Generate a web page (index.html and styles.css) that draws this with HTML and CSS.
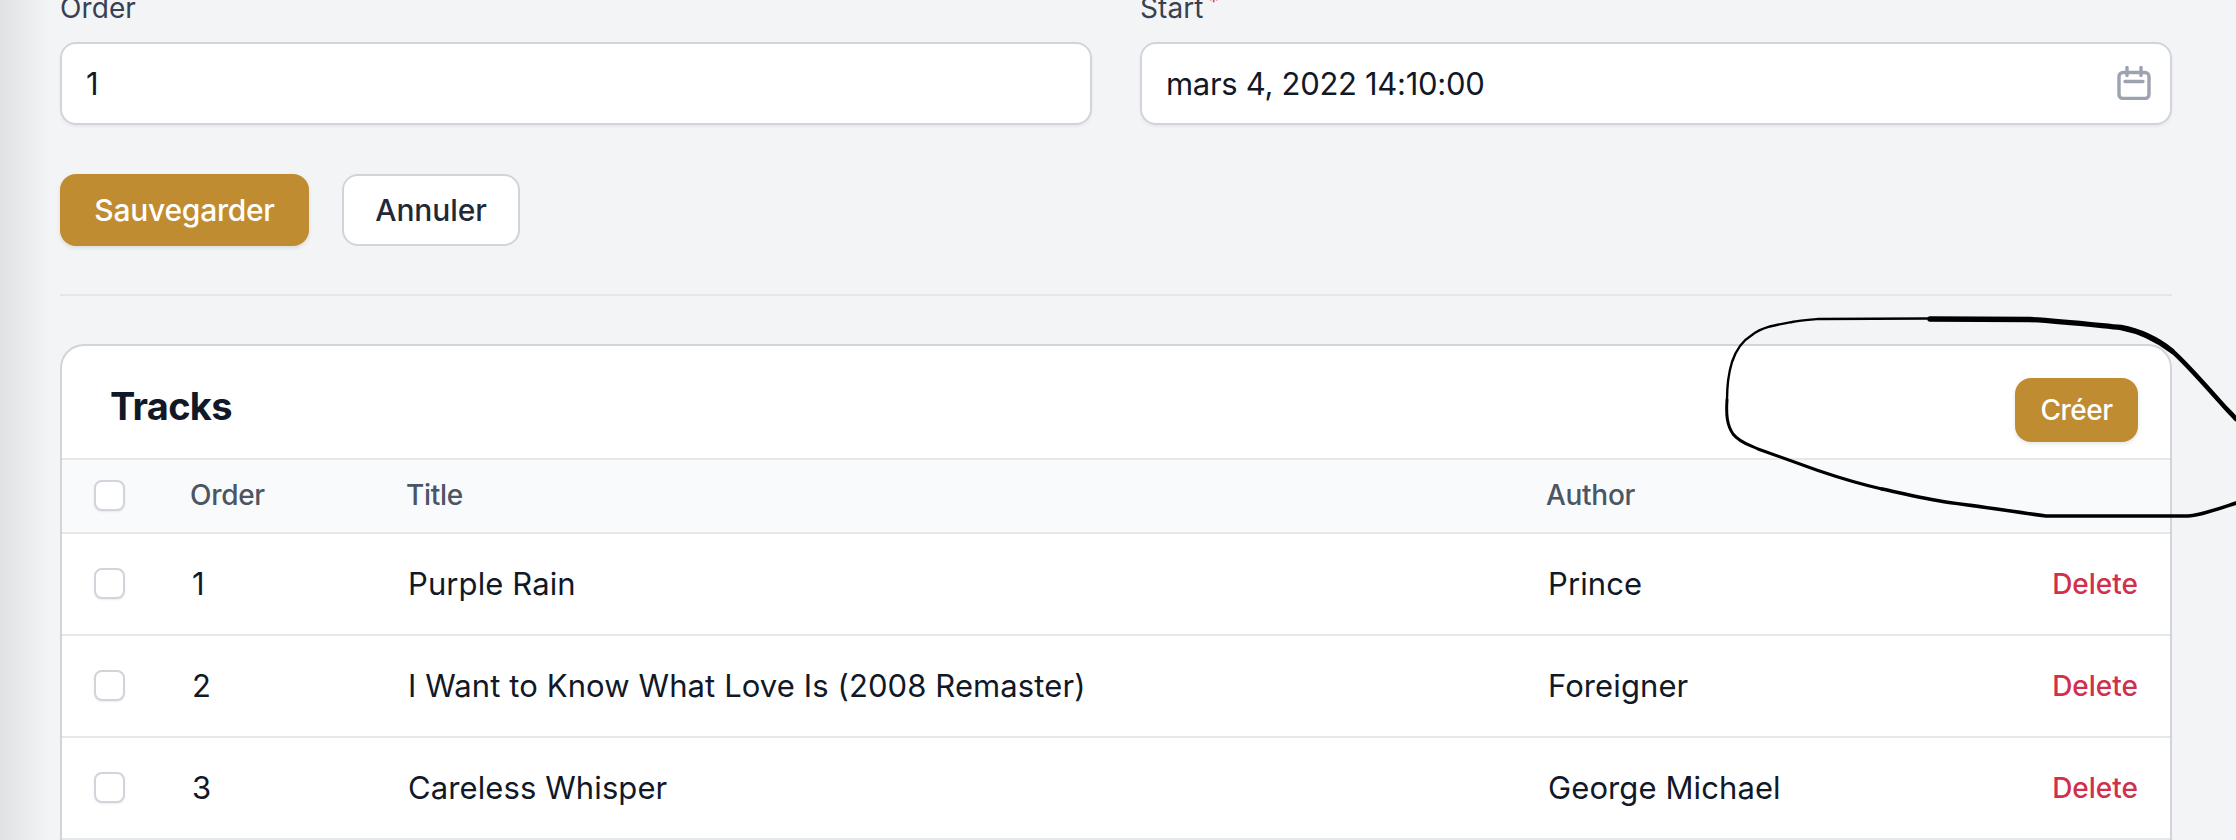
FILE: index.html
```html
<!DOCTYPE html>
<html lang="fr">
<head>
<meta charset="utf-8">
<title>Tracks</title>
<link rel="stylesheet" href="styles.css">
</head>
<body>
<main class="page">
  <section class="fields">
    <div class="field">
      <label class="label">Order</label>
      <div class="input">1</div>
    </div>
    <div class="field">
      <label class="label">Start<sup class="req">*</sup></label>
      <div class="input input-date">
        <span>mars 4, 2022 14:10:00</span>
        <svg class="cal" viewBox="0 0 34 34" fill="none" stroke="#9ca3af" stroke-width="3.4" stroke-linecap="round" stroke-linejoin="round"><rect x="2" y="6.5" width="30" height="26" rx="4"/><path d="M10 1.5v8M24 1.5v8M8 15.5h18"/></svg>
      </div>
    </div>
  </section>
  <div class="actions">
    <button class="btn btn-primary">Sauvegarder</button>
    <button class="btn btn-plain">Annuler</button>
  </div>
  <hr class="rule">
  <section class="card">
    <header class="card-head">
      <h2 class="card-title">Tracks</h2>
      <button class="btn-small">Créer</button>
    </header>
    <table class="table">
      <colgroup><col class="c1"><col class="c2"><col class="c3"><col class="c4"><col class="c5"></colgroup>
      <thead>
        <tr><th><span class="check"></span></th><th>Order</th><th>Title</th><th>Author</th><th></th></tr>
      </thead>
      <tbody>
        <tr><td><span class="check"></span></td><td>1</td><td>Purple Rain</td><td>Prince</td><td class="del">Delete</td></tr>
        <tr><td><span class="check"></span></td><td>2</td><td>I Want to Know What Love Is (2008 Remaster)</td><td>Foreigner</td><td class="del">Delete</td></tr>
        <tr><td><span class="check"></span></td><td>3</td><td>Careless Whisper</td><td>George Michael</td><td class="del">Delete</td></tr>
      </tbody>
    </table>
  </section>
</main>
<svg class="scribble" viewBox="0 0 2236 840" fill="none" stroke="#000" stroke-linecap="round" stroke-linejoin="round">
  <path stroke-width="2.4" d="M1928 318.5 L1818 319 C1805 320 1798 320.5 1792 322 C1775 325 1762 327 1752 335 C1742 341 1736 350 1732 362 C1728 375 1727 385 1727 400"/>
  <path stroke-width="3" d="M1727 400 C1726 415 1727 425 1733 434 C1740 443 1750 445 1758 449 C1780 457 1800 464 1818 470.5 C1840 478 1860 484 1882 489"/>
  <path stroke-width="3.6" d="M1882 489 C1905 494 1925 499 1949 502.5 C1985 507 2015 512 2046 516 L2188 516 C2200 515.5 2215 510 2236 503"/>
  <path stroke-width="5.4" d="M1930 319 L2030 319.5 C2060 321 2095 325 2121 327.5 C2140 331 2158 340 2172 351"/>
  <path stroke-width="4.6" d="M2172 351 C2185 362 2205 385 2222 404 C2228 411 2232 414 2236 419"/>
</svg>
</body>
</html>
```
FILE: styles.css
```css
* { box-sizing: border-box; }
html, body { margin: 0; height: 840px; overflow: hidden; }
body {
  position: relative;
  background: linear-gradient(90deg, #e0e1e3 0, #f3f4f6 50px);
  font-family: Inter, "Liberation Sans", sans-serif;
  color: #111827;
}
.page { height: 852px; padding: 0 64px 0 60px; margin-top: -12px; overflow: hidden; }
.fields { display: grid; grid-template-columns: 1fr 1fr; column-gap: 48px; }
.label {
  display: block;
  height: 40px;
  margin-bottom: 14px;
  font-size: 28px;
  line-height: 40px;
  letter-spacing: 0.1px;
  color: #374151;
  position: relative;
}
.req { color: #dc2626; font-size: 20px; line-height: 0; position: relative; top: 1px; margin-left: 5px; }
.input {
  display: flex;
  align-items: center;
  justify-content: space-between;
  height: 83px;
  padding: 0 19px 0 24px;
  background: #fff;
  border: 2px solid #d1d5db;
  border-radius: 16px;
  box-shadow: 0 2px 3px rgba(0,0,0,.05);
  font-size: 31px;
  letter-spacing: -0.3px;
}
.cal { width: 34px; height: 34px; flex: none; margin-top: -2px; }
.actions { display: flex; gap: 33px; margin-top: 49px; }
.btn {
  height: 72px;
  border-radius: 16px;
  font: 500 30px Inter, "Liberation Sans", sans-serif;
  padding: 0;
}
.btn-primary { width: 249px; background: #c08c31; color: #fff; border: 0; box-shadow: 0 2px 4px rgba(0,0,0,.1); letter-spacing: -0.25px; }
.btn-plain { width: 178px; background: #fff; color: #1f2937; border: 2px solid #d1d5db; letter-spacing: -0.1px; }
.rule { height: 2px; margin: 48px 0; border: 0; background: #e5e7eb; }
.card {
  background: #fff;
  border: 2px solid #d1d5db;
  border-bottom: 0;
  border-radius: 24px 24px 0 0;
  height: 496px;
  overflow: hidden;
}
.card-head {
  display: flex;
  align-items: center;
  justify-content: space-between;
  height: 112px;
  padding: 15px 32px 0 48px;
}
.card-title { margin: -8px 0 0; font-size: 38px; font-weight: 700; letter-spacing: -0.7px; color: #111827; }
.btn-small {
  width: 123px;
  height: 64px;
  border: 0;
  border-radius: 16px;
  background: #c08c31;
  color: #fff;
  font: 500 28px Inter, "Liberation Sans", sans-serif;
  letter-spacing: -0.5px;
  box-shadow: 0 2px 4px rgba(0,0,0,.1);
}
.table { width: 100%; border-collapse: collapse; table-layout: fixed; }
.c1 { width: 128px; }
.c2 { width: 216px; }
.c3 { width: 1140px; }
.c5 { width: 120px; }
th {
  height: 74px;
  padding: 0 0 2px;
  background: #f9fafb;
  border-top: 2px solid #e5e7eb;
  border-bottom: 2px solid #e5e7eb;
  font-size: 28px;
  font-weight: 500;
  letter-spacing: -0.3px;
  color: #4b5563;
  text-align: left;
}
td {
  height: 102px;
  padding: 0 0 2px 2px;
  border-bottom: 2px solid #e5e7eb;
  font-size: 31px;
  letter-spacing: 0.1px;
  color: #111827;
}
.check {
  display: block;
  width: 31px;
  height: 31px;
  margin-left: 32px;
  background: #fff;
  border: 2px solid #d1d5db;
  border-radius: 8px;
  box-shadow: 0 1px 2px rgba(0,0,0,.08);
}
td:first-child, th:first-child { padding-left: 0; }
td.del {
  padding: 0 32px 0 0;
  text-align: right;
  color: #d0304c;
  font-size: 28px;
  font-weight: 500;
  letter-spacing: 0;
}
.scribble { position: absolute; left: 0; top: 0; width: 2236px; height: 840px; pointer-events: none; }
```
